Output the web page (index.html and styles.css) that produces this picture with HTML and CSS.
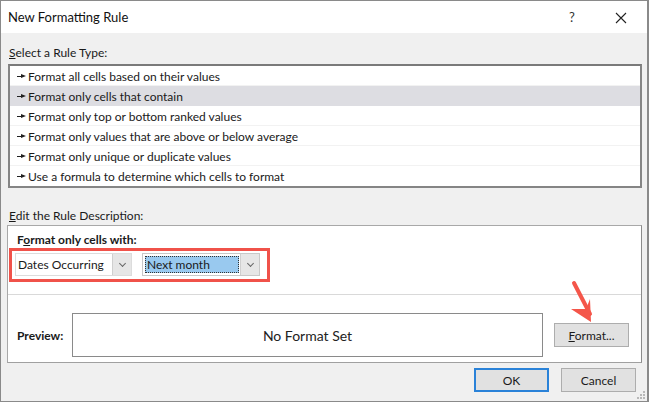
FILE: index.html
```html
<!doctype html>
<html>

<head>
    <meta charset="utf-8" />
    <title>New Formatting Rule</title>
    <link rel="stylesheet" href="styles.css">
</head>

<body>
    <div class="dialog">
        <div class="titlebar">
            <span class="titlebar__text">New Formatting Rule</span>
            <span class="titlebar__help">?</span>
            <span class="titlebar__close">
                <svg width="12" height="12" viewBox="0 0 12 12"><path d="M1 1L11 11M11 1L1 11" stroke="#222" stroke-width="1.1" fill="none"/></svg>
            </span>
        </div>
        <div class="content">
            <div class="label"><u>S</u>elect a Rule Type:</div>
            <ul class="rules">
                <li class="rules__item"><i class="pointer"></i>Format all cells based on their values</li>
                <li class="rules__item rules__item--active"><i class="pointer"></i>Format only cells that contain</li>
                <li class="rules__item"><i class="pointer"></i>Format only top or bottom ranked values</li>
                <li class="rules__item"><i class="pointer"></i>Format only values that are above or below average</li>
                <li class="rules__item"><i class="pointer"></i>Format only unique or duplicate values</li>
                <li class="rules__item rules__item--last"><i class="pointer"></i>Use a formula to determine which cells to format</li>
            </ul>
            <div class="label label--second"><u>E</u>dit the Rule Description:</div>
            <div class="desc">
                <div class="desc__top">
                    <div class="desc__title">F<u>o</u>rmat only cells with:</div>
                    <div class="highlight">
                        <div class="combo combo--first">
                            <span class="combo__value">Dates Occurring</span>
                            <span class="combo__btn"><i class="chev"></i></span>
                        </div>
                        <div class="combo combo--second">
                            <span class="combo__value"><span class="combo__sel">Next month</span></span>
                            <span class="combo__btn"><i class="chev"></i></span>
                        </div>
                    </div>
                </div>
                <div class="desc__preview">
                    <span class="preview__label">Preview:</span>
                    <div class="preview__box">No Format Set</div>
                    <button class="btn btn--format"><u>F</u>ormat...</button>
                </div>
            </div>
            <div class="footer">
                <button class="btn btn--ok">OK</button>
                <button class="btn btn--cancel">Cancel</button>
            </div>
        </div>
        <svg class="arrow" width="40" height="50" viewBox="0 0 40 50">
            <path d="M7 5L23 36" stroke="#f4564a" stroke-width="4" stroke-linecap="round" fill="none"/>
            <path d="M4 31L24 44L23 21L19 31Z" fill="#f4564a"/>
        </svg>
        <svg class="grip" width="10" height="10" viewBox="0 0 10 10">
            <rect x="7" y="1" width="2" height="2" fill="#b8b8b8"/>
            <rect x="4" y="4" width="2" height="2" fill="#b8b8b8"/>
            <rect x="7" y="4" width="2" height="2" fill="#b8b8b8"/>
            <rect x="1" y="7" width="2" height="2" fill="#b8b8b8"/>
            <rect x="4" y="7" width="2" height="2" fill="#b8b8b8"/>
            <rect x="7" y="7" width="2" height="2" fill="#b8b8b8"/>
        </svg>
    </div>
</body>

</html>
```

FILE: styles.css
```css
html,
body {
    margin: 0;
    padding: 0;
    background: #fff;
}

body {
    font-family: Lato, "Noto Sans", sans-serif;
    font-size: 12px;
    color: #1a1a1a;
}

.dialog {
    position: relative;
    width: 649px;
    height: 402px;
    box-sizing: border-box;
    border: 1px solid #8a8a8a;
    border-right-width: 2px;
    background: #f0f0f0;
    display: flex;
    flex-direction: column;
}

.titlebar {
    height: 32px;
    background: #fff;
    display: flex;
    align-items: center;
    padding-left: 7px;
}

.titlebar__text {
    flex: 1;
    font-size: 13px;
    color: #111;
}

.titlebar__help {
    width: 12px;
    font-size: 13px;
    color: #333;
}

.titlebar__close {
    width: 12px;
    margin: 2px 20px 0 34px;
    display: flex;
}

.content {
    flex: 1;
    display: flex;
    flex-direction: column;
    padding: 11px 5px 0 6px;
}

.label {
    line-height: 16px;
    padding: 1px 0 0 2px;
    height: 16px;
    box-sizing: border-box;
}

.label--second {
    margin-top: 19px;
}

.rules {
    list-style: none;
    margin: 4px 0 0 1px;
    padding: 0;
    height: 124px;
    box-sizing: border-box;
    border: 2px solid #858585;
    border-top-color: #7a7a7a;
    background: #fff;
}

.rules__item {
    height: 20px;
    box-sizing: border-box;
    border-bottom: 1px solid #f2f2f2;
    display: flex;
    align-items: center;
    padding: 2px 0 0 7px;
    line-height: 18px;
}

.rules__item--active {
    background: #dddde2;
    border-bottom-color: #dddde2;
}

.rules__item--last {
    border-bottom: 0;
}

.pointer {
    position: relative;
    width: 9px;
    height: 5px;
    margin: -1px 2px 0 0;
}

.pointer::before {
    content: "";
    position: absolute;
    left: 0;
    top: 2px;
    width: 5px;
    height: 1px;
    background: #222;
}

.pointer::after {
    content: "";
    position: absolute;
    left: 4px;
    top: 0;
    border-left: 5px solid #222;
    border-top: 2.5px solid transparent;
    border-bottom: 2.5px solid transparent;
}

.desc {
    margin: 2px 0 0 0;
    height: 138px;
    box-sizing: border-box;
    border: 1px solid #a8a8a8;
    border-right-color: #8c8c8c;
    border-bottom-color: #a0a0a0;
    background: #fff;
    display: flex;
    flex-direction: column;
}

.desc__top {
    padding: 6px 0 0 1px;
    height: 69px;
    box-sizing: border-box;
    border-bottom: 1px solid #d9d9d9;
}

.desc__title {
    font-weight: bold;
    line-height: 16px;
    padding-left: 8px;
}

.highlight {
    display: flex;
    gap: 10px;
    width: 261px;
    height: 34px;
    box-sizing: border-box;
    border: 3px solid #f0524a;
    padding: 2px 0 0 3px;
}

.combo {
    height: 23px;
    box-sizing: border-box;
    border: 1px solid #dcdcdc;
    display: flex;
    background: #fff;
}

.combo--first {
    width: 117px;
}

.combo--second {
    width: 118px;
    border-color: #c8c8c8;
}

.combo__value {
    flex: 1;
    display: flex;
    align-items: center;
    padding-left: 2px;
}

.combo__sel {
    display: flex;
    align-items: center;
    width: 94px;
    height: 17px;
    box-sizing: border-box;
    border: 1px dotted #333;
    background: #99c9ef;
    padding-left: 1px;
}

.combo__btn {
    width: 18px;
    background: #e6e6e6;
    border-left: 1px solid #cfcfcf;
    display: flex;
    align-items: center;
    justify-content: center;
}

.chev {
    width: 4px;
    height: 4px;
    border-right: 1px solid #666;
    border-bottom: 1px solid #666;
    transform: rotate(45deg);
    margin-top: -3px;
}

.desc__preview {
    flex: 1;
    display: flex;
    align-items: center;
    padding: 13px 0 0 9px;
}

.preview__label {
    font-weight: bold;
    width: 55px;
}

.preview__box {
    width: 471px;
    height: 44px;
    box-sizing: border-box;
    border: 1px solid #8a8a8a;
    display: flex;
    align-items: center;
    justify-content: center;
    font-size: 14px;
    color: #222;
}

.btn {
    font-family: inherit;
    font-size: 12px;
    color: #1a1a1a;
    background: #e1e1e1;
    border: 1px solid #adadad;
    padding: 0;
    height: 24px;
}

.btn--format {
    width: 75px;
    margin-left: 11px;
}

.footer {
    display: flex;
    justify-content: flex-end;
    gap: 12px;
    margin-top: 5px;
    padding-right: 6px;
}

.btn--ok {
    width: 75px;
    border: 2px solid #2a82d8;
}

.btn--cancel {
    width: 75px;
}

.arrow {
    position: absolute;
    left: 566px;
    top: 277px;
}

.grip {
    position: absolute;
    right: 1px;
    bottom: 1px;
}
```
